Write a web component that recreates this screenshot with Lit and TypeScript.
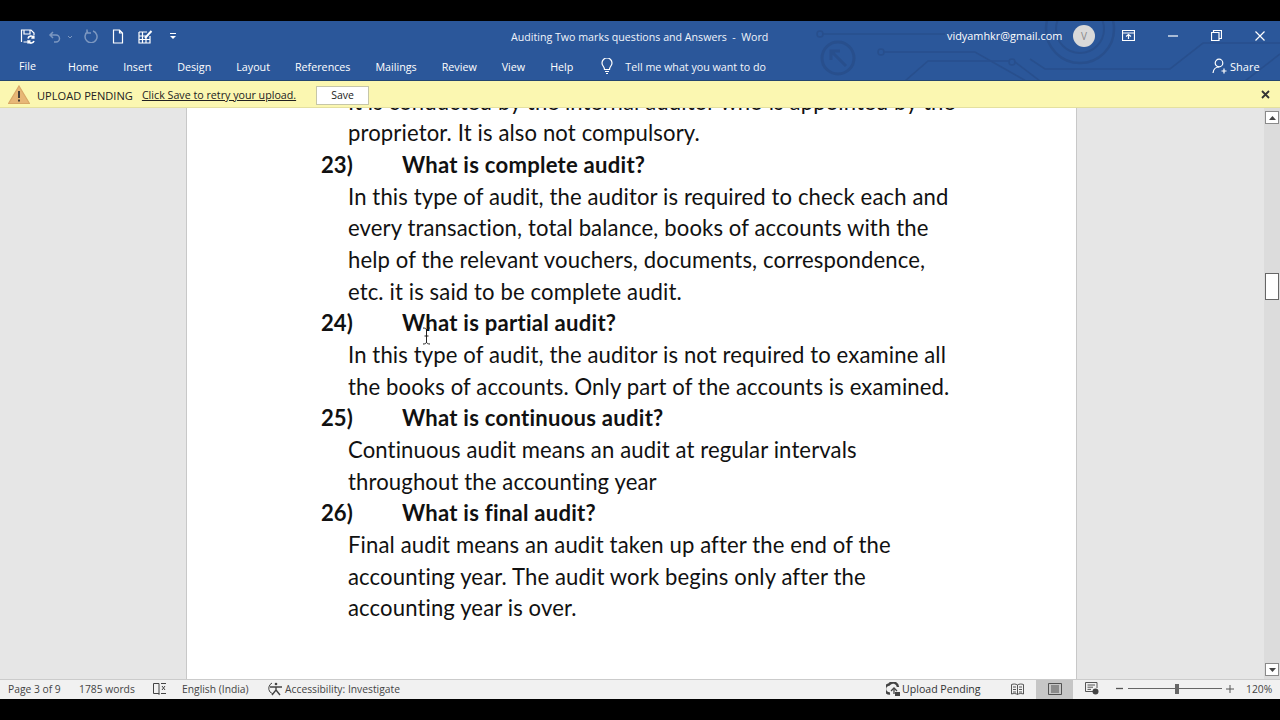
import { LitElement, html, css, svg } from "lit";
import { customElement } from "lit/decorators.js";

type Item = { n?: string; q?: string; l?: string };
const doc: Item[] = [
  { l: "It is conducted by the internal auditor who is appointed by the" },
  { l: "proprietor. It is also not compulsory." },
  { n: "23)", q: "What is complete audit?" },
  { l: "In this type of audit, the auditor is required to check each and" },
  { l: "every transaction, total balance, books of accounts with the" },
  { l: "help of the relevant vouchers, documents, correspondence," },
  { l: "etc. it is said to be complete audit." },
  { n: "24)", q: "What is partial audit?" },
  { l: "In this type of audit, the auditor is not required to examine all" },
  { l: "the books of accounts. Only part of the accounts is examined." },
  { n: "25)", q: "What is continuous audit?" },
  { l: "Continuous audit means an audit at regular intervals" },
  { l: "throughout the accounting year" },
  { n: "26)", q: "What is final audit?" },
  { l: "Final audit means an audit taken up after the end of the" },
  { l: "accounting year. The audit work begins only after the" },
  { l: "accounting year is over." },
];
const tabs = ["Home", "Insert", "Design", "Layout", "References", "Mailings", "Review", "View", "Help"];

const ic = (w: number, h: number, body: unknown, cls = "") =>
  html`<svg class=${cls} width=${w} height=${h} viewBox="0 0 ${w} ${h}" fill="none" stroke="currentColor" stroke-width="1.2">${body}</svg>`;

@customElement("app-root")
export class AppRoot extends LitElement {
  static styles = css`
    :host { display: block; width: 1280px; height: 720px; background: #000; overflow: hidden; font-family: "Open Sans", "Noto Sans", sans-serif; }
    .app { display: flex; flex-direction: column; height: 699px; padding-top: 21px; box-sizing: border-box; }
    .ribbon { position: relative; height: 60px; background: #2b579a; color: #fff; flex: none; overflow: hidden; border-bottom: 1px solid #24466f; box-sizing: border-box; }
    .circuit { position: absolute; left: 0; top: 0; }
    .row { position: relative; display: flex; align-items: center; height: 30px; }
    .qat { padding-left: 20px; }
    .qat svg { flex: none; }
    .dim { opacity: .38; }
    .g10 { margin-left: 10px; }
    .g12 { margin-left: 12px; }
    .g14 { margin-left: 14px; }
    .g16 { margin-left: 16px; }
    .title { position: absolute; left: 511px; top: 0; line-height: 32px; font-size: 10.65px; white-space: nowrap; color: #f0f4fa; }
    .win { position: absolute; left: 947px; top: 0; right: 0; height: 29px; display: flex; align-items: center; }
    .mail { font-size: 10.9px; width: 126px; white-space: nowrap; }
    .avatar { width: 22px; height: 22px; border-radius: 50%; background: #d9d9d9; color: #8a8a8a; font-size: 10px; display: flex; align-items: center; justify-content: center; margin-right: 27px; }
    .w1 { margin-right: 33px; }
    .w2 { margin-right: 33px; }
    .w3 { margin-right: 33px; }
    .tabs { padding: 1px 0 0 19px; box-sizing: border-box; font-size: 10.72px; }
    .file { width: 49px; margin-top: -1px; }
    .tab-list { display: flex; gap: 25px; }
    .lamp { margin-left: 28px; margin-right: 12px; }
    .tell { white-space: nowrap; color: #f3f6fb; font-size: 10.7px; }
    .share { position: absolute; left: 1212px; top: 30px; height: 30px; display: flex; align-items: center; gap: 3px; font-size: 11px; }
    .notice { flex: none; height: 27px; background: #fbf7b1; display: flex; align-items: center; position: relative; font-size: 11px; color: #222; box-sizing: border-box; border-bottom: 1px solid #e4e0a0; padding-top: 2px; }
    .warn { margin: -2px 7px 0 8px; flex: none; }
    .link { margin-left: 9px; text-decoration: underline; color: #222; font-size: 10.7px; white-space: nowrap; }
    .upl { white-space: nowrap; font-size: 11.1px; }
    .btn { margin-left: 20px; width: 53px; height: 19px; background: #fff; border: 1px solid #c6c6a8; display: flex; align-items: center; justify-content: center; font-size: 10.5px; box-sizing: border-box; }
    .nclose { position: absolute; right: 10px; top: 9px; color: #333; }
    .body { flex: 1; display: flex; min-height: 0; background: #e6e6e6; position: relative; }
    .gutter-l { width: 186px; flex: none; border-right: 1px solid #c8c8c8; }
    .page { width: 890px; flex: none; background: #fff; overflow: hidden; padding-left: 134px; box-sizing: border-box; border-right: 1px solid #c8c8c8; }
    .flow { margin-top: -22.3px; font-family: Lato, "Open Sans", sans-serif; font-size: 22.1px; line-height: 31.66px; color: #111; white-space: nowrap; font-variant-ligatures: none; }
    .ln { padding-left: 27px; letter-spacing: .12px; }
    .hd { display: flex; font-weight: 700; }
    .num { width: 81px; flex: none; }
    .q { letter-spacing: .24px; }
    .gutter-r { flex: 1; }
    .sb { width: 16px; flex: none; display: flex; flex-direction: column; align-items: center; padding: 3px 0 3px; box-sizing: border-box; background: #dcdcdc; color: #444; }
    .sb-btn { width: 14px; height: 13px; background: #fff; border: 1px solid #8a8a8a; box-sizing: border-box; display: flex; align-items: center; justify-content: center; flex: none; }
    .sb-gap { height: 149px; flex: none; }
    .thumb { width: 14px; height: 27px; background: #fff; border: 1.5px solid #666; box-sizing: border-box; flex: none; }
    .sb-fill { flex: 1; }
    .cursor { position: absolute; left: 422px; top: 219px; color: #222; }
    .status { flex: none; height: 20px; background: #f1f1f1; border-top: 1px solid #cbcbcb; box-sizing: border-box; position: relative; display: flex; align-items: center; font-size: 10.3px; color: #444; white-space: nowrap; padding: 0 0 2px 8px; }
    .s1 { width: 71px; }
    .s2 { width: 73px; }
    .s3 { width: 30px; display: flex; }
    .s4 { width: 85px; }
    .s5 { margin-right: 2px; display: flex; }
    .right { position: absolute; left: 886px; top: 0; height: 19px; display: flex; align-items: center; }
    .ulic { margin-top: -2px; }
    .upend { margin: -2px 0 0 2px; width: 109px; color: #333; font-size: 10.6px; }
    .rd { width: 25px; display: flex; margin-top: -2px; }
    .active { width: 37px; height: 19px; background: #c6c6c6; display: flex; align-items: center; justify-content: center; margin-right: 12px; padding-bottom: 2px; box-sizing: border-box; }
    .web { width: 31px; display: flex; margin-top: -2px; }
    .zm { color: #555; display: flex; align-items: center; margin-top: -2px; }
    .track { position: relative; width: 94px; height: 1px; background: #666; margin: 0 4px 0 5px; }
    .knob { position: absolute; left: 47px; top: -4px; width: 4px; height: 10px; background: #666; }
    .pct { margin-left: 12px; margin-top: -2px; }
  `;

  render() {
    return html`<div class="app">
      <div class="ribbon">
        ${ic(1280, 60, svg`
          <g stroke="#284f8d" stroke-width="1.6">
            <path d="M823 13H945"/>
            <circle cx="820" cy="13" r="3"/>
            <circle cx="838" cy="37" r="16" stroke-width="3"/>
            <path stroke-width="3" d="M832 31L846 45M831 39V30H840"/>
            <circle cx="881" cy="31" r="3"/>
            <path d="M884 31H975L1012 52L1026 60"/>
            <path d="M905 60L928 40H1009M1015 41L1040 60"/>
            <circle cx="1012" cy="41" r="3"/>
            <circle cx="1080" cy="8" r="34" stroke-width="2.500"/>
            <circle cx="1080" cy="8" r="24" stroke-width="2"/>
            <path d="M1030 38L1045 48H1170L1203 22H1280M1245 60L1280 33"/>
          </g>`, "circuit")}
        <div class="row qat">
          ${ic(16, 16, svg`<path d="M1.500 14V2H11L14 5V7M4 2V6H10V2M3.500 14H7"/><path stroke-width="1.600" d="M8 10.500A3 3 0 0 1 13.500 9.500M14 13A3 3 0 0 1 8.500 13.500M13.800 7.500V10H11.300M8 15.500V13H10.500"/>`)}
          ${ic(26, 14, svg`<path stroke-width="1.500" d="M5 3L2 6L5 9M2 6H8A3.500 3.500 0 0 1 8 13H6"/><path stroke-width="1" d="M20 7L22 9L24 7"/>`, "dim g12")}
          ${ic(14, 14, svg`<path stroke-width="1.500" d="M4 2.500A6 6 0 1 0 9 2M3 .5V4H7"/>`, "dim g10")}
          ${ic(12, 15, svg`<path d="M1.500 1H7.500L10.500 4V14H1.500ZM7.500 1V4H10.500"/>`, "g14")}
          ${ic(15, 15, svg`<path d="M1 3H9M1 3V14H12V7M1 7H8M1 10.500H12M4.500 3V14M8 7V14"/><path stroke-width="2" d="M7 9L13.500 2"/>`, "g14")}
          ${ic(8, 10, svg`<path d="M1 2.500H7" stroke-width="1"/><path d="M1 5H7L4 8Z" fill="currentColor" stroke="none"/>`, "g16")}
        </div>
        <div class="title">Auditing Two marks questions and Answers&nbsp; -&nbsp; Word</div>
        <div class="win">
          <span class="mail">vidyamhkr@gmail.com</span>
          <span class="avatar">V</span>
          ${ic(13, 11, svg`<path d="M.5 .5H12.500V10.500H.5ZM.5 3H12.500M4 6.500L6.500 4.500L9 6.500M6.500 4.500V9"/>`, "w1")}
          ${ic(10, 10, svg`<path d="M0 5H10"/>`, "w2")}
          ${ic(11, 11, svg`<path d="M.5 2.500H8V10.500H.5ZM2.500 2.500V.5H10.500V8.500H8" />`, "w3")}
          ${ic(10, 10, svg`<path d="M.5 .5L9.500 9.500M9.500 .5L.5 9.500"/>`)}
        </div>
        <div class="row tabs">
          <span class="file">File</span>
          <div class="tab-list">${tabs.map((t) => html`<span>${t}</span>`)}</div>
          ${ic(12, 17, svg`<path d="M3.500 11.500C3.500 8.500 1 8 1 5A5 5 0 0 1 11 5C11 8 8.500 8.500 8.500 11.500ZM4 13.500H8M5 15.500H7"/>`, "lamp")}
          <span class="tell">Tell me what you want to do</span>
        </div>
        <div class="share">
          ${ic(15, 16, svg`<circle cx="7" cy="5" r="3.800"/><path d="M1 15C1.500 11 4 9 7 9M9.500 13H14.500M12 10.500V15.500"/>`)}
          <span>Share</span>
        </div>
      </div>

      <div class="notice">
        ${ic(22, 19, svg`<path d="M11 1L21.500 18.500H.5Z" fill="#e7b777" stroke="#d9a866"/><path d="M11 6V13" stroke="#333" stroke-width="1.800"/><path d="M11 14.500V16.500" stroke="#333" stroke-width="1.800"/>`, "warn")}
        <span class="upl">UPLOAD PENDING</span>
        <span class="link">Click Save to retry your upload.</span>
        <span class="btn">Save</span>
        ${ic(9, 9, svg`<path stroke-width="1.800" d="M1 1L8 8M8 1L1 8"/>`, "nclose")}
      </div>

      <div class="body">
        <div class="gutter-l"></div>
        <div class="page">
          <div class="flow">
            ${doc.map((d) => d.n
              ? html`<div class="hd"><span class="num">${d.n}</span><span class="q">${d.q}</span></div>`
              : html`<div class="ln">${d.l}</div>`)}
          </div>
        </div>
        <div class="gutter-r"></div>
        <div class="sb">
          <div class="sb-btn">${ic(7, 4, svg`<path d="M3.500 0L7 4H0Z" fill="currentColor" stroke="none"/>`)}</div>
          <div class="sb-gap"></div>
          <div class="thumb"></div>
          <div class="sb-fill"></div>
          <div class="sb-btn">${ic(7, 4, svg`<path d="M3.500 4L7 0H0Z" fill="currentColor" stroke="none"/>`)}</div>
        </div>
        ${ic(9, 18, svg`<path d="M1 1C3 1 4.500 1.500 4.500 3V15C4.500 16.500 3 17 1 17M8 1C6 1 4.500 1.500 4.500 3M8 17C6 17 4.500 16.500 4.500 15M2.500 9H6.500" stroke-width="1"/>`, "cursor")}
      </div>

      <div class="status">
        <span class="s1">Page 3 of 9</span>
        <span class="s2">1785 words</span>
        <span class="s3">${ic(15, 13, svg`<path d="M7 1.500H1.500V11.500H7V12.500M7 1.500V12.500M9 1.500H14M9 11.500H14" stroke-width="1"/><path d="M10 4L13 8M13 4L10 8" stroke-width="1"/>`)}</span>
        <span class="s4">English (India)</span>
        <span class="s5">${ic(16, 15, svg`<path d="M5 2A6 6 0 0 0 3 11L6 13" stroke-width="1"/><circle cx="9" cy="3" r="1.300" fill="currentColor" stroke="none"/><path d="M3 6H15M9 6V9L5 14M9 9L13 14" stroke-width="1.400"/>`)}</span>
        <span>Accessibility: Investigate</span>
        <div class="right">
          ${ic(14, 14, svg`<path d="M4 11.500A4 4 0 0 1 3 2.500A5 5 0 0 1 12 5" stroke="#444" stroke-width="2.400"/><path d="M5 9L8 6L11 9" stroke="#444" stroke-width="1.300"/><path d="M8 7V12" stroke="#444" stroke-width="1.300"/><rect x="9" y="10" width="5" height="4" fill="#444" stroke="none"/>`, "ulic")}
          <span class="upend">Upload Pending</span>
          <span class="rd">${ic(13, 12, svg`<path d="M6.500 2C5 .8 2.500 .8 .5 1.500V11C2.500 10.300 5 10.300 6.500 11.500C8 10.300 10.500 10.300 12.500 11V1.500C10.500 .8 8 .8 6.500 2ZM6.500 2V11.500M2 4H5M2 6.500H5M2 9H5M8 4H11M8 6.500H11M8 9H11" stroke-width=".9"/>`)}</span>
          <span class="active">${ic(14, 12, svg`<path d="M.5 .5H13.500V11.500H.5ZM3 3H11M3 5H11M3 7H11M3 9H11" stroke-width=".9"/>`)}</span>
          <span class="web">${ic(14, 13, svg`<path d="M9 9.500H.5V.5H12V6M2.500 3H10M2.500 5.200H8M2.500 7.400H6" stroke-width=".9"/><circle cx="10.500" cy="9.500" r="3" fill="currentColor" stroke="none"/>`)}</span>
          <span class="zm">
            ${ic(7, 7, svg`<path d="M0 3.500H7" stroke-width="1.300"/>`)}
            <span class="track"><span class="knob"></span></span>
            ${ic(8, 8, svg`<path d="M0 4H8M4 0V8" stroke-width="1"/>`)}
          </span>
          <span class="pct">120%</span>
        </div>
      </div>
    </div>`;
  }
}
